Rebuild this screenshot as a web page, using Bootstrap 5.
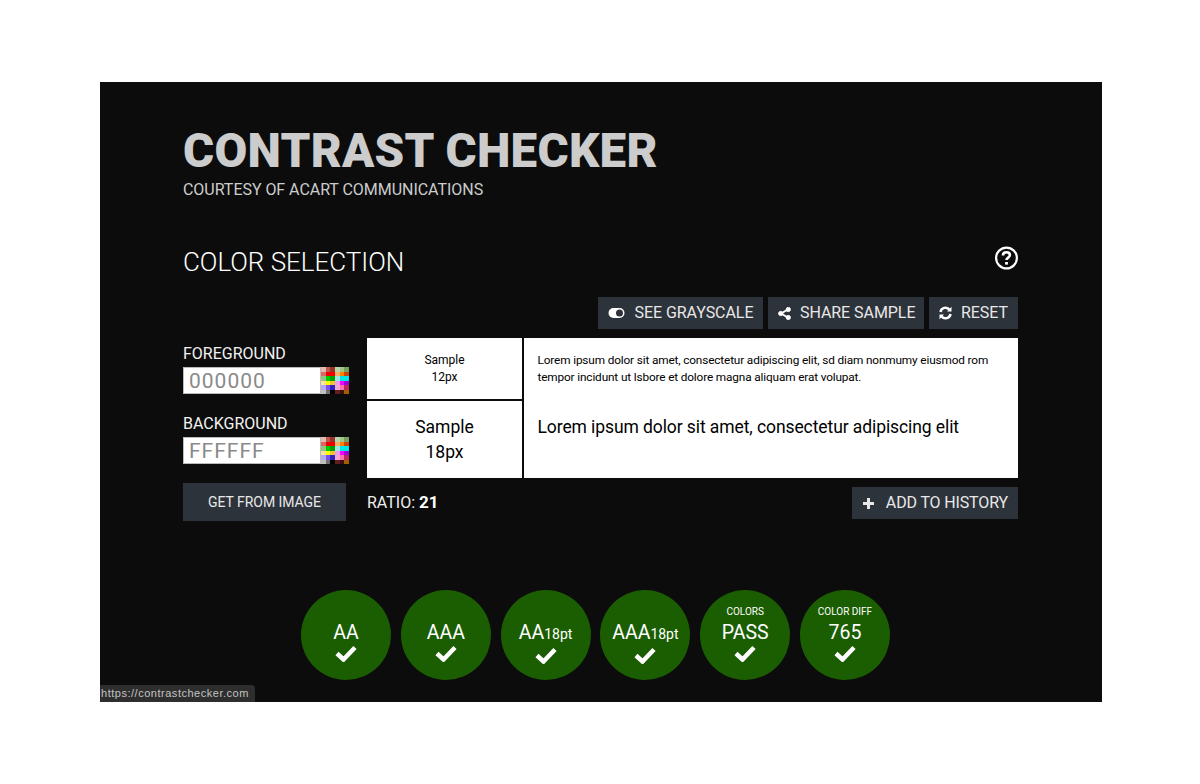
<!DOCTYPE html>
<html lang="en">
<head>
<meta charset="utf-8">
<title>Contrast Checker</title>
<link href="https://cdn.jsdelivr.net/npm/bootstrap@5.3.0/dist/css/bootstrap.min.css" rel="stylesheet">
<style>
html,body{height:100%;}
body{background:#fff;font-family:Roboto,"Liberation Sans",sans-serif;overflow:hidden;}
.stage{width:1002px;height:620px;margin:82px 0 0 100px;background:#0c0c0c;color:#fff;padding:48px 84px 0 83px;position:relative;}
.ttl{font-family:Roboto,sans-serif;font-weight:900;font-size:47.5px;line-height:42px;color:#cccccc;margin:0;letter-spacing:.27px;}
.sub{font-size:16px;line-height:20px;color:#cccccc;margin-top:8px;letter-spacing:-.04px;}
.sel-head{margin-top:40px;height:44px;}
.sel-title{font-size:26px;line-height:44px;font-weight:300;margin:0;letter-spacing:-.03px;color:#fff;}
.help{margin-top:-9px;}
.tbar{margin-top:13px;gap:4.5px;}
.dk{background:#2d333b;color:#e8e8e8;border:0;border-radius:0;font-size:16px;line-height:32px;height:32px;padding:0 10px;display:inline-flex;align-items:center;gap:9px;white-space:nowrap;letter-spacing:-.05px;}
.dk:hover{background:#2d333b;color:#e8e8e8;}
.tight-end{padding-right:9px;}
.wide-gap{gap:11px;letter-spacing:-.14px;}
.work{margin-top:9px;gap:21px;}
.leftc{width:163px;flex:none;}
.lbl{font-size:16px;line-height:20px;margin:6px 0 3px;display:block;color:#f2f2f2;}
.gap-lbl{margin-top:20px;}
.hexrow{height:27px;width:166px;}
.hex{width:138px;height:27px;border:1px solid #bbb;background:#fff;color:#8a8a8a;font-size:21px;line-height:26px;padding:0 5px;letter-spacing:1px;flex:none;}
.pal{flex:none;}
.getb{width:163px;height:38px;justify-content:center;font-size:14px;margin-top:19px;padding:0;}
.rightc{width:651px;flex:none;}
.smp{display:grid;grid-template-columns:155px 1fr;grid-template-rows:61px 77px;background:#0c0c0c;height:140px;column-gap:1.5px;row-gap:2px;color:#000;}
.cell{background:#fff;text-align:center;}
.s12{font-size:12px;line-height:17px;padding-top:14px;}
.s18{font-size:17.5px;line-height:25px;padding-top:14px;}
.txt{grid-column:2;grid-row:1 / span 2;background:#fff;padding:14px 14px;}
.txt p{margin:0;}
.t12{font-size:11.8px;line-height:17px;height:63px;letter-spacing:-.14px;}
.t18{font-size:17.5px;line-height:25px;letter-spacing:-.09px;}
.ratio-row{margin-top:9px;height:32px;}
.rtext{font-size:16px;color:#eee;}
.rtext b{font-size:17px;font-weight:700;color:#fff;}
.badges{margin-top:69px;gap:9.8px;padding-left:118px;}
.circ{width:90px;height:90px;border-radius:50%;background:#1b5e02;color:#fff;text-align:center;flex:none;display:flex;flex-direction:column;align-items:center;padding-top:33px;position:relative;}
.big{font-size:19.5px;line-height:19px;white-space:nowrap;}
.big small{font-size:14px;}
.cap{position:absolute;top:16px;left:0;right:0;font-size:10px;line-height:11px;}
.ck{margin-top:3px;display:block;}
.stat{position:absolute;left:0;bottom:0;width:155px;height:17px;background:#2e2e2e;color:#c4c4c4;font-size:11px;line-height:17px;padding-left:1px;border-top-right-radius:4px;font-family:"Liberation Sans",sans-serif;letter-spacing:.52px;}
</style>
</head>
<body>
<main class="stage">
  <h1 class="ttl">CONTRAST CHECKER</h1>
  <div class="sub">COURTESY OF ACART COMMUNICATIONS</div>

  <div class="sel-head d-flex justify-content-between align-items-center">
    <h2 class="sel-title">COLOR SELECTION</h2>
    <svg class="help" width="24" height="24" viewBox="0 0 24 24" fill="none" stroke="#fff" stroke-width="2.200"><circle cx="12.500" cy="12" r="10.400"/><path d="M9 9.400c0-2 1.500-3.100 3.500-3.100s3.400 1.100 3.400 2.800c0 2.500-3.400 2.500-3.400 5" stroke-width="2.600"/><path d="M12.500 16v2.600" stroke-width="2.800"/></svg>
  </div>

  <div class="tbar d-flex justify-content-end">
    <button class="btn dk" type="button"><svg width="17" height="12" viewBox="0 0 17 12"><rect x=".5" y="1" width="16" height="10" rx="5" fill="#fff"/><circle cx="11.500" cy="6" r="3.500" fill="#2d333b"/></svg>SEE GRAYSCALE</button>
    <button class="btn dk tight-end" type="button"><svg width="13" height="13" viewBox="0 0 13 13" fill="#fff" stroke="#fff"><path d="M10 2.500 3 6.500l7 4" fill="none" stroke-width="1.900"/><circle cx="10.300" cy="2.500" r="2.100"/><circle cx="2.700" cy="6.500" r="2.100"/><circle cx="10.300" cy="10.500" r="2.100"/></svg>SHARE SAMPLE</button>
    <button class="btn dk" type="button"><svg width="13" height="14" viewBox="0 0 13 14" fill="none" stroke="#fff" stroke-width="2.500"><path d="M1.500 6a5 5 0 0 1 9-2.200"/><path d="M11.500 8a5 5 0 0 1-9 2.200"/><path d="M12.500 .8v4.700H8z" fill="#fff" stroke="none"/><path d="M.5 13.200V8.500H5z" fill="#fff" stroke="none"/></svg>RESET</button>
  </div>

  <div class="work d-flex">
    <div class="leftc">
      <label class="lbl">FOREGROUND</label>
      <div class="hexrow d-flex"><div class="hex">000000</div><svg class="pal" width="28" height="27" viewBox="0 0 6 6" preserveAspectRatio="none" shape-rendering="crispEdges"><g id="pal"><rect width="1" height="1" fill="#e6b8af"/><rect x="1" width="1" height="1" fill="#b85b50"/><rect x="2" width="1" height="1" fill="#98322a"/><rect x="3" width="1" height="1" fill="#b7d7a8"/><rect x="4" width="1" height="1" fill="#a2c48b"/><rect x="5" width="1" height="1" fill="#76a25f"/><rect y="1" width="1" height="1" fill="#e06666"/><rect x="1" y="1" width="2" height="1" fill="#f00000"/><rect x="3" y="1" width="1" height="1" fill="#f6b26b"/><rect x="4" y="1" width="1" height="1" fill="#ff7f00"/><rect x="5" y="1" width="1" height="1" fill="#cc4400"/><rect y="2" width="1" height="1" fill="#93c47d"/><rect x="1" y="2" width="1" height="1" fill="#00cc00"/><rect x="2" y="2" width="1" height="1" fill="#00a000"/><rect x="3" y="2" width="1" height="1" fill="#a2e4e4"/><rect x="4" y="2" width="2" height="1" fill="#00e5e5"/><rect y="3" width="1" height="1" fill="#ffe599"/><rect x="1" y="3" width="1" height="1" fill="#ffff00"/><rect x="2" y="3" width="1" height="1" fill="#f1c232"/><rect x="3" y="3" width="1" height="1" fill="#ea9bf0"/><rect x="4" y="3" width="1" height="1" fill="#ff00ff"/><rect x="5" y="3" width="1" height="1" fill="#a000e0"/><rect y="4" width="1" height="1" fill="#b4a7f6"/><rect x="1" y="4" width="1" height="1" fill="#7a50e8"/><rect x="2" y="4" width="1" height="1" fill="#3020c0"/><rect x="3" y="4" width="1" height="1" fill="#f4a7cf"/><rect x="4" y="4" width="1" height="1" fill="#ff70b0"/><rect x="5" y="4" width="1" height="1" fill="#c02860"/><rect y="5" width="1" height="1" fill="#c0c0c0"/><rect x="1" y="5" width="1" height="1" fill="#707070"/><rect x="2" y="5" width="1" height="1" fill="#000"/><rect x="3" y="5" width="1" height="1" fill="#602020"/><rect x="4" y="5" width="1" height="1" fill="#401010"/><rect x="5" y="5" width="1" height="1" fill="#a06000"/></g></svg></div>
      <label class="lbl gap-lbl">BACKGROUND</label>
      <div class="hexrow d-flex"><div class="hex">FFFFFF</div><svg class="pal" width="28" height="27" viewBox="0 0 6 6" preserveAspectRatio="none" shape-rendering="crispEdges"><use href="#pal"/></svg></div>
      <button class="btn dk getb" type="button">GET FROM IMAGE</button>
    </div>
    <div class="rightc">
      <div class="smp">
        <div class="cell s12">Sample<br>12px</div>
        <div class="cell s18">Sample<br>18px</div>
        <div class="txt">
          <p class="t12">Lorem ipsum dolor sit amet, consectetur adipiscing elit, sd diam nonmumy eiusmod rom tempor incidunt ut lsbore et dolore magna aliquam erat volupat.</p>
          <p class="t18">Lorem ipsum dolor sit amet, consectetur adipiscing elit</p>
        </div>
      </div>
      <div class="ratio-row d-flex justify-content-between align-items-center">
        <div class="rtext">RATIO: <b>21</b></div>
        <button class="btn dk wide-gap" type="button"><svg width="13" height="13" viewBox="0 0 13 13" fill="none" stroke="#e8e8e8" stroke-width="3"><path d="M6.500 1v11M1 6.500h11"/></svg>ADD TO HISTORY</button>
      </div>
    </div>
  </div>

  <div class="badges d-flex">
    <div class="circ"><div class="big">AA</div><svg class="ck" width="22" height="17" viewBox="0 0 22 17" fill="none" stroke="#fff" stroke-width="4.500"><path d="M2 8.500l6.500 6L20 2.500"/></svg></div>
    <div class="circ"><div class="big">AAA</div><svg class="ck" width="22" height="17" viewBox="0 0 22 17" fill="none" stroke="#fff" stroke-width="4.500"><path d="M2 8.500l6.500 6L20 2.500"/></svg></div>
    <div class="circ"><div class="big">AA<small>18pt</small></div><svg class="ck" width="22" height="17" viewBox="0 0 22 17" fill="none" stroke="#fff" stroke-width="4.500"><path d="M2 8.500l6.500 6L20 2.500"/></svg></div>
    <div class="circ"><div class="big">AAA<small>18pt</small></div><svg class="ck" width="22" height="17" viewBox="0 0 22 17" fill="none" stroke="#fff" stroke-width="4.500"><path d="M2 8.500l6.500 6L20 2.500"/></svg></div>
    <div class="circ"><div class="cap">COLORS</div><div class="big">PASS</div><svg class="ck" width="22" height="17" viewBox="0 0 22 17" fill="none" stroke="#fff" stroke-width="4.500"><path d="M2 8.500l6.500 6L20 2.500"/></svg></div>
    <div class="circ"><div class="cap">COLOR DIFF</div><div class="big">765</div><svg class="ck" width="22" height="17" viewBox="0 0 22 17" fill="none" stroke="#fff" stroke-width="4.500"><path d="M2 8.500l6.500 6L20 2.500"/></svg></div>
  </div>

  <div class="stat">https://contrastchecker.com</div>
</main>
<script src="https://cdn.jsdelivr.net/npm/bootstrap@5.3.0/dist/js/bootstrap.bundle.min.js"></script>
</body>
</html>
